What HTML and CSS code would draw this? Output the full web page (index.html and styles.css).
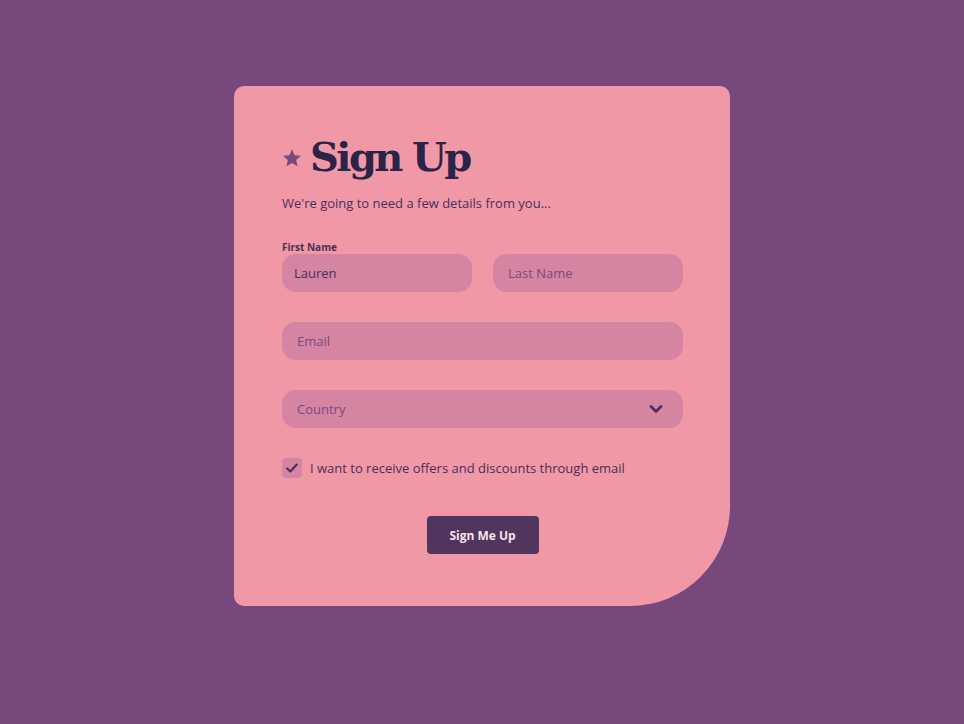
FILE: index.html
```html
<!DOCTYPE html>
<html lang="en">
<head>
    <meta charset="UTF-8">
    <meta name="viewport" content="width=device-width, initial-scale=1.0">
    <title>Sign Up</title>
    <link rel="stylesheet" href="styles.css">
</head>
<body>
    <main class="page">
        <form class="card">
            <h1 class="title">
                <svg class="star" viewBox="0 0 24 24" width="20" height="20"><path d="M12 1.5l3.1 7.2 7.7.6-5.9 5.1 1.8 7.6L12 17.9 5.3 22l1.8-7.6L1.2 9.3l7.7-.6z"/></svg>
                Sign Up
            </h1>
            <p class="intro">We're going to need a few details from you...</p>

            <div class="row">
                <div class="field">
                    <label class="label" for="firstName">First Name</label>
                    <input class="input filled" id="firstName" type="text" value="Lauren">
                </div>
                <div class="field">
                    <input class="input" id="lastName" type="text" placeholder="Last Name">
                </div>
            </div>

            <div class="field">
                <input class="input" id="email" type="email" placeholder="Email">
            </div>

            <div class="field select">
                <div class="input">Country</div>
                <svg class="chevron" viewBox="0 0 14 10" width="14" height="10"><path d="M2 2.5l5 5 5-5"/></svg>
            </div>

            <label class="check">
                <span class="box">
                    <svg viewBox="0 0 16 16" width="14" height="14"><path d="M2.5 8.5l3.5 3.5 7.5-8"/></svg>
                </span>
                I want to receive offers and discounts through email
            </label>

            <div class="actions">
                <button class="button" type="button">Sign Me Up</button>
            </div>
        </form>
    </main>
</body>
</html>
```

FILE: styles.css
```css
body {
    margin: 0;
    background: #77487c;
    font-family: 'Open Sans', 'DejaVu Sans', sans-serif;
    color: #3a2750;
}
.page {
    display: flex;
    justify-content: center;
    padding-top: 86px;
    min-height: 638px;
}
.card {
    box-sizing: border-box;
    width: 496px;
    height: 520px;
    padding: 48px 47px 0 48px;
    background: #f098a6;
    border-radius: 10px 10px 100px 10px;
}
.title {
    display: flex;
    align-items: center;
    gap: 8px;
    margin: -1px 0 0;
    font-family: 'DejaVu Serif', serif;
    font-size: 40px;
    font-weight: bold;
    color: #2c2348;
    line-height: 48px;
    letter-spacing: -2.6px;
}
.star {
    fill: #77487c;
    margin-top: 2px;
}
.intro {
    margin: 13px 0 0;
    font-size: 13px;
    color: #4a2f5e;
}
.row {
    display: flex;
    gap: 21px;
    margin-top: 29px;
}
.row .field {
    flex: 1;
    display: flex;
    flex-direction: column;
    justify-content: flex-end;
}
.field {
    position: relative;
    margin-bottom: 30px;
}
.row .field {
    margin-bottom: 0;
}
.row + .field {
    margin-top: 30px;
}
.label {
    font-size: 10px;
    font-weight: bold;
    color: #4a2f5e;
    line-height: 13px;
}
.input {
    box-sizing: border-box;
    width: 100%;
    height: 38px;
    padding: 0 15px;
    border: none;
    border-radius: 14px;
    background: #d584a2;
    font-family: inherit;
    font-size: 13px;
    color: #7c4a7e;
    display: flex;
    align-items: center;
    outline: none;
}
.input::placeholder {
    color: #7c4a7e;
}
.input.filled {
    padding-left: 12px;
    color: #4a2f5e;
}
.chevron {
    position: absolute;
    right: 20px;
    top: 14px;
    fill: none;
    stroke: #4a2f5e;
    stroke-width: 2.6;
    stroke-linecap: round;
    stroke-linejoin: round;
}
.check {
    display: flex;
    align-items: center;
    gap: 8px;
    font-size: 13px;
    color: #4a2f5e;
}
.box {
    width: 20px;
    height: 20px;
    border-radius: 4px;
    background: #d584a2;
    display: flex;
    align-items: center;
    justify-content: center;
}
.box svg {
    fill: none;
    stroke: #4a2f5e;
    stroke-width: 2.4;
    stroke-linecap: round;
    stroke-linejoin: round;
}
.actions {
    display: flex;
    justify-content: center;
    margin-top: 38px;
}
.button {
    width: 112px;
    height: 38px;
    border: none;
    border-radius: 4px;
    background: #50355f;
    color: #fbe1ea;
    font-family: inherit;
    font-size: 12px;
    font-weight: bold;
}
```
